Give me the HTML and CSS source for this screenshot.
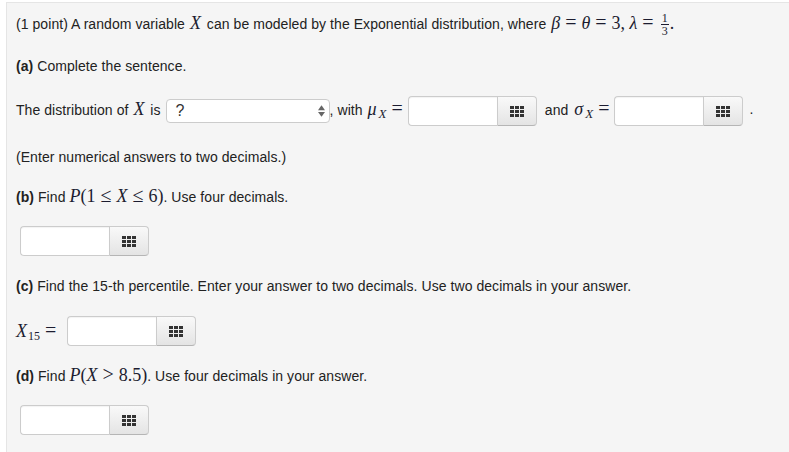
FILE: index.html
```html
<!DOCTYPE html>
<html lang="en">
<head>
  <meta charset="UTF-8" />
  <meta name="viewport" content="width=device-width, initial-scale=1.0"/>
  <title>Exponential distribution problem</title>
  <link rel="stylesheet" href="styles.css">
</head>
<body>
  <svg class="defs" width="0" height="0">
    <symbol id="grid" viewBox="0 0 14 11">
      <rect x="0" y="0" width="4" height="3"/><rect x="5" y="0" width="4" height="3"/><rect x="10" y="0" width="4" height="3"/>
      <rect x="0" y="4" width="4" height="3"/><rect x="5" y="4" width="4" height="3"/><rect x="10" y="4" width="4" height="3"/>
      <rect x="0" y="8" width="4" height="3"/><rect x="5" y="8" width="4" height="3"/><rect x="10" y="8" width="4" height="3"/>
    </symbol>
  </svg>

  <div class="problem">
    <p class="line first">(1 point) A random variable <i class="m x-var">X</i> can be modeled by the Exponential distribution, where
      <span class="m big eq"><i>β</i><span class="rel">=</span><i>θ</i><span class="rel">=</span>3, <i>λ</i><span class="rel">=</span><span class="frac"><span>1</span><span>3</span></span>.</span></p>

    <p class="line part-a"><b>(a)</b> Complete the sentence.</p>

    <div class="row sentence">
      <span class="raised">The distribution of <i class="m x-var">X</i> is</span>
      <div class="fake-select"><span>?</span>
        <svg class="arrows" width="7" height="14" viewBox="0 0 8 13"><path d="M4 0 8 5.5H0Z"/><path d="M0 7.5H8L4 13Z"/></svg>
      </div>
      <span class="raised after-select">, with <span class="m big"><i>μ</i><sub><i>X</i></sub><span class="rel">=</span></span></span>
      <div class="answer"><div class="field"></div><div class="btn"><svg width="14" height="11"><use href="#grid"/></svg></div></div>
      <span class="raised and">and <span class="m big"><i>σ</i><sub><i>X</i></sub><span class="rel">=</span></span></span>
      <div class="answer"><div class="field"></div><div class="btn"><svg width="14" height="11"><use href="#grid"/></svg></div></div>
      <span class="raised dot">.</span>
    </div>

    <p class="line note">(Enter numerical answers to two decimals.)</p>

    <p class="line part-b"><b>(b)</b> Find <span class="m big"><i>P</i>(1<span class="rel">≤</span><i>X</i><span class="rel">≤</span>6)</span>. Use four decimals.</p>
    <div class="answer solo"><div class="field"></div><div class="btn"><svg width="14" height="11"><use href="#grid"/></svg></div></div>

    <p class="line part-c"><b>(c)</b> Find the 15-th percentile. Enter your answer to two decimals. Use two decimals in your answer.</p>
    <div class="row x15">
      <span class="m big"><i>X</i><sub>15</sub><span class="rel">=</span></span>
      <div class="answer"><div class="field"></div><div class="btn"><svg width="14" height="11"><use href="#grid"/></svg></div></div>
    </div>

    <p class="line part-d"><b>(d)</b> Find <span class="m big"><i>P</i>(<i>X</i><span class="rel">&gt;</span>8.5)</span>. Use four decimals in your answer.</p>
    <div class="answer solo"><div class="field"></div><div class="btn"><svg width="14" height="11"><use href="#grid"/></svg></div></div>
  </div>
</body>
</html>
```

FILE: styles.css
```css
html, body {
  margin: 0;
  height: 100%;
  overflow: hidden;
}
body {
  background: #fff;
  color: #222;
  font-family: "Liberation Sans", Arial, sans-serif;
  font-size: 14px;
  line-height: 20px;
  letter-spacing: 0.06px;
}
.defs {
  position: absolute;
}
.problem {
  box-sizing: border-box;
  margin: 2px 0 0 6px;
  height: 450px;
  padding: 9px 0 0 9px;
  background: #f5f5f5;
  border-top: 1px solid #e5e5e5;
  border-left: 1px solid #e5e5e5;
}
.line {
  margin: 0;
  white-space: nowrap;
}
.part-a { margin-top: 19px; }
.sentence { margin-top: 20px; }
.note { margin-top: 21px; }
.part-b { margin-top: 19px; }
.part-c { margin-top: 20px; }
.x15 { margin-top: 20px; }
.part-d { margin-top: 19px; }

.m {
  font-family: "Liberation Serif", "Times New Roman", serif;
  color: #1c1c30;
  letter-spacing: 0;
}
.big {
  font-size: 18px;
}
.eq {
  margin-left: 1px;
}
.x-var {
  font-size: 18px;
  margin: 0 2px 0 1px;
}
.rel {
  margin: 0 5px;
  font-size: 20px;
  line-height: 0;
}
.m sub {
  font-size: 13px;
  line-height: 0;
  vertical-align: -3px;
  margin-left: 2px;
}
.x15 .m sub {
  font-size: 12px;
  margin-left: 1px;
}
.frac {
  display: inline-flex;
  flex-direction: column;
  vertical-align: middle;
  font-size: 12px;
  line-height: 12px;
  text-align: center;
  margin: 0 1px 0 2px;
}
.frac span:first-child {
  border-bottom: 1px solid #1c1c30;
  padding: 0 1px;
}

.row {
  display: flex;
  align-items: center;
  height: 30px;
  white-space: nowrap;
}
.raised {
  padding-bottom: 4px;
}
.fake-select {
  box-sizing: border-box;
  display: flex;
  align-items: center;
  justify-content: space-between;
  width: 164px;
  height: 24px;
  margin: 0 0 1px 5px;
  padding: 0 4px 0 9px;
  background: #fff;
  border: 1px solid #ccc;
  border-radius: 4px;
  font-size: 16px;
  color: #333;
}
.arrows {
  fill: #666;
}
.after-select .m {
  margin-left: 1px;
}
.and {
  margin-left: 8px;
}
.and .m {
  margin-left: 2px;
}
.dot {
  margin-left: 6px;
}
.answer {
  display: flex;
  width: 129px;
  height: 30px;
  flex: none;
}
.solo {
  margin: 19px 0 0 4px;
}
.x15 .answer { margin-left: 6px; }
.field {
  box-sizing: border-box;
  width: 89px;
  background: #fff;
  border: 1px solid #ccc;
  border-right: 0;
  border-radius: 4px 0 0 4px;
  box-shadow: inset 0 1px 1px rgba(0,0,0,0.05);
}
.btn {
  box-sizing: border-box;
  width: 40px;
  display: flex;
  align-items: center;
  justify-content: center;
  background: linear-gradient(#f9f9f9, #e4e4e4);
  border: 1px solid #ccc;
  border-bottom-color: #b5b5b5;
  border-radius: 0 4px 4px 0;
}
.btn svg {
  fill: #333;
}
```
